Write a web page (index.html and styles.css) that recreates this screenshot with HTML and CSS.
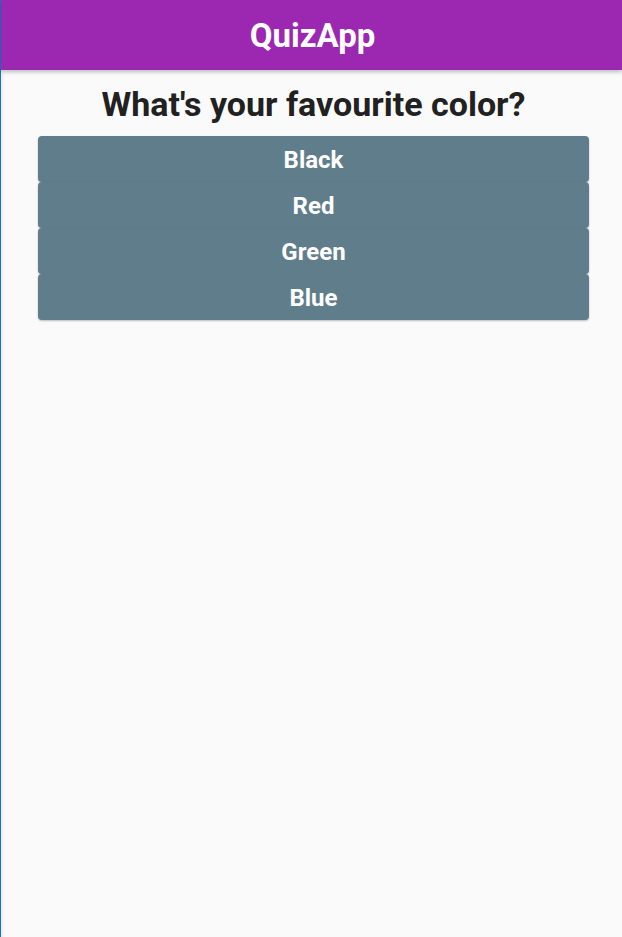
FILE: index.html
```html
<!DOCTYPE html>
<html lang="en">
<head>
  <meta charset="UTF-8" />
  <meta name="viewport" content="width=device-width, initial-scale=1.0"/>
  <title>QuizApp</title>
  <link rel="stylesheet" href="styles.css">
</head>
<body>
  <div class="app">
    <header>
      <h1>QuizApp</h1>
    </header>

    <div class="quiz">
      <h2 class="question">What's your favourite color?</h2>
      <div class="answers">
        <button class="answer">Black</button>
        <button class="answer">Red</button>
        <button class="answer">Green</button>
        <button class="answer">Blue</button>
      </div>
    </div>
  </div>
</body>
</html>
```

FILE: styles.css
```css
html, body {
  margin: 0;
  height: 100%;
}
body {
  font-family: "Roboto", "Liberation Sans", sans-serif;
  background-color: #fafafa;
}
.app {
  min-height: 100%;
  border-left: 1px solid #1a73c8;
  box-shadow: inset 4px 0 3px -2px rgba(0,0,0,0.06);
}
header {
  display: flex;
  justify-content: center;
  align-items: center;
  height: 70px;
  background: #9c27b0;
  box-shadow: 0 2px 4px rgba(0,0,0,0.25);
}
header h1 {
  font-size: 33px;
  color: white;
  margin: 0 0 0 2px;
  font-weight: bold;
}
.quiz {
  padding: 0 33px 0 37px;
}
.question {
  margin: 14px 0 12px;
  text-align: center;
  font-size: 34px;
  line-height: 40px;
  color: #212121;
}
.answers {
  display: flex;
  flex-direction: column;
}
.answer {
  height: 46px;
  padding: 2px 0 0;
  background: #607d8b;
  color: white;
  border: none;
  border-radius: 4px;
  font-family: inherit;
  font-size: 24px;
  font-weight: bold;
  box-shadow: 0 1px 2px rgba(0,0,0,0.25);
  cursor: pointer;
}
.answer:hover {
  background: #6b8795;
}
```
